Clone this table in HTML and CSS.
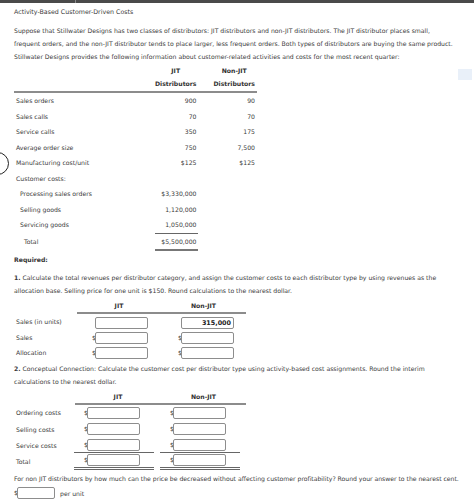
FILE: index.html
```html
<!DOCTYPE html>
<html>
<head>
<meta charset="utf-8">
<link rel="stylesheet" href="styles.css">
</head>
<body>
<div class="topbar"><div class="topbar-left"></div><div class="topbar-right"></div></div>
<div class="page">
  <div class="circle"></div>
  <div class="corner-btn"></div>
  <div class="title">Activity-Based Customer-Driven Costs</div>
  <p class="para">Suppose that Stillwater Designs has two classes of distributors: JIT distributors and non-JIT distributors. The JIT distributor places small, frequent orders, and the non-JIT distributor tends to place larger, less frequent orders. Both types of distributors are buying the same product. Stillwater Designs provides the following information about customer-related activities and costs for the most recent quarter:</p>

  <table class="data">
    <thead>
      <tr>
        <th class="lbl"></th>
        <th class="c2">JIT<br>Distributors</th>
        <th class="c3">Non-JIT<br>Distributors</th>
      </tr>
    </thead>
    <tbody>
      <tr><td class="lbl">Sales orders</td><td class="c2">900</td><td class="c3">90</td></tr>
      <tr><td class="lbl">Sales calls</td><td class="c2">70</td><td class="c3">70</td></tr>
      <tr><td class="lbl">Service calls</td><td class="c2">350</td><td class="c3">175</td></tr>
      <tr><td class="lbl">Average order size</td><td class="c2">750</td><td class="c3">7,500</td></tr>
      <tr><td class="lbl">Manufacturing cost/unit</td><td class="c2">$125</td><td class="c3">$125</td></tr>
      <tr><td class="lbl">Customer costs:</td><td class="c2"></td><td class="c3"></td></tr>
      <tr><td class="lbl ind1">Processing sales orders</td><td class="c2">$3,330,000</td><td class="c3"></td></tr>
      <tr><td class="lbl ind1">Selling goods</td><td class="c2">1,120,000</td><td class="c3"></td></tr>
      <tr><td class="lbl ind1">Servicing goods</td><td class="c2">1,050,000</td><td class="c3"></td></tr>
      <tr><td class="lbl ind2">Total</td><td class="c2 total">$5,500,000</td><td class="c3"></td></tr>
    </tbody>
  </table>

  <div class="required">Required:</div>
  <p class="para q1"><b>1.</b> Calculate the total revenues per distributor category, and assign the customer costs to each distributor type by using revenues as the allocation base. Selling price for one unit is $150. Round calculations to the nearest dollar.</p>

  <table class="ans ans1">
    <thead>
      <tr><th class="albl"></th><th class="a2">JIT</th><th class="a3">Non-JIT</th></tr>
    </thead>
    <tbody>
      <tr>
        <td class="albl">Sales (in units)</td>
        <td class="a2"><span class="cur"></span><span class="inp"></span></td>
        <td class="a3"><span class="cur"></span><span class="inp filled">315,000</span></td>
      </tr>
      <tr>
        <td class="albl">Sales</td>
        <td class="a2"><span class="cur">$</span><span class="inp"></span></td>
        <td class="a3"><span class="cur">$</span><span class="inp"></span></td>
      </tr>
      <tr>
        <td class="albl">Allocation</td>
        <td class="a2"><span class="cur">$</span><span class="inp"></span></td>
        <td class="a3"><span class="cur">$</span><span class="inp"></span></td>
      </tr>
    </tbody>
  </table>

  <p class="para q2"><b>2.</b> Conceptual Connection: Calculate the customer cost per distributor type using activity-based cost assignments. Round the interim calculations to the nearest dollar.</p>

  <table class="ans ans2">
    <thead>
      <tr><th class="albl"></th><th class="a2">JIT</th><th class="a3">Non-JIT</th></tr>
    </thead>
    <tbody>
      <tr>
        <td class="albl">Ordering costs</td>
        <td class="a2"><div class="box"><span class="cur">$</span><span class="inp"></span></div></td>
        <td class="a3"><div class="box"><span class="cur">$</span><span class="inp"></span></div></td>
      </tr>
      <tr>
        <td class="albl">Selling costs</td>
        <td class="a2"><div class="box"><span class="cur">$</span><span class="inp"></span></div></td>
        <td class="a3"><div class="box"><span class="cur">$</span><span class="inp"></span></div></td>
      </tr>
      <tr>
        <td class="albl">Service costs</td>
        <td class="a2"><div class="box sub"><span class="cur">$</span><span class="inp"></span></div></td>
        <td class="a3"><div class="box sub"><span class="cur">$</span><span class="inp"></span></div></td>
      </tr>
      <tr>
        <td class="albl">Total</td>
        <td class="a2"><div class="box tot"><span class="cur">$</span><span class="inp"></span></div></td>
        <td class="a3"><div class="box tot"><span class="cur">$</span><span class="inp"></span></div></td>
      </tr>
    </tbody>
  </table>

  <p class="para q3">For non JIT distributors by how much can the price be decreased without affecting customer profitability? Round your answer to the nearest cent.</p>
  <div class="final"><span class="cur">$</span><span class="inp small"></span><span class="unit">per unit</span></div>
</div>
</body>
</html>
```

FILE: styles.css
```css
html, body {
  margin: 0;
  padding: 0;
  background: #ffffff;
}
body {
  font-family: "DejaVu Sans", Verdana, sans-serif;
  font-size: 6.15px;
  color: #3a3a3a;
  line-height: 13px;
}
.topbar {
  display: flex;
  height: 3px;
  background: #4a4a4a;
}
.topbar-left {
  width: 75px;
  border-right: 1px solid #8a8a8a;
}
.page {
  position: relative;
  padding: 2px 0 0 14px;
}
.circle {
  position: absolute;
  left: -14px;
  top: 149px;
  width: 21px;
  height: 21px;
  border: 1.5px solid #222;
  border-radius: 50%;
}
.corner-btn {
  position: absolute;
  left: 458px;
  top: 66px;
  width: 14px;
  height: 11px;
  background: #e9f0f9;
}
.title {
  font-size: 6.3px;
  line-height: 14px;
}
.para {
  margin: 5px 0 0 0;
  width: 440px;
}
table {
  border-collapse: collapse;
  border-spacing: 0;
}
.data {
  margin-top: 1px;
  width: 243px;
}
.data th {
  font-weight: bold;
  color: #333;
  border-bottom: 2px solid #8c8c8c;
  padding: 0 2px 1px 0;
  line-height: 13px;
  text-align: center;
}
.data td {
  height: 15.5px;
  padding: 0;
  line-height: 15.5px;
}
.data .lbl {
  width: 140px;
  padding-left: 2px;
  text-align: left;
}
.data .ind1 { padding-left: 6px; }
.data .ind2 { padding-left: 10px; }
.data .c2 {
  width: 41px;
  padding-right: 2px;
  text-align: right;
}
.data th.c2 { text-align: center; }
.data .c3 {
  width: 41px;
  padding-left: 15px;
  padding-right: 2px;
  text-align: right;
}
.data th.c3 { text-align: center; }
.data td.total {
  border-top: 1px solid #666;
  border-bottom: 2px solid #777;
}
.required {
  font-weight: bold;
  color: #333;
  margin-top: 2px;
}
.q1 { margin-top: 5px; }
.ans {
  margin-top: 3px;
}
.ans th {
  font-weight: bold;
  color: #333;
  padding: 0;
  line-height: 12px;
  text-align: center;
}
.ans td {
  padding: 0;
  height: 15px;
  vertical-align: middle;
}
.ans .albl {
  padding-left: 2px;
  text-align: left;
}
.ans1 .albl { width: 61px; }
.ans1 th.a2, .ans1 th.a3 { border-bottom: 2px solid #8c8c8c; }
.ans1 .a2 { width: 84px; }
.ans1 .a3 { width: 85px; }
.ans1 td.a2 { padding-left: 15px; box-sizing: border-box; }
.ans1 td.a3 { padding-left: 17px; box-sizing: border-box; }
.ans1 tbody tr:first-child td { height: 17px; }
.cur {
  display: inline-block;
  width: 3px;
  text-align: right;
  vertical-align: middle;
  line-height: 12px;
}
.inp {
  display: inline-block;
  vertical-align: middle;
  width: 53px;
  height: 12px;
  box-sizing: border-box;
  border: 1px solid #8d8d8d;
  border-radius: 2px;
  background: #fff;
  line-height: 10px;
  text-align: right;
  padding-right: 2px;
  font-size: 6.4px;
}
.inp.filled {
  font-weight: bold;
  color: #222;
}
.q2 { margin-top: 2px; }
.ans2 .albl { width: 59px; }
.ans2 th.a2, .ans2 th.a3 { border-bottom: 2px solid #8c8c8c; }
.ans2 .a2 { width: 86px; }
.ans2 .a3 { width: 85px; }
.ans2 td { height: 16px; }
.ans2 .box {
  box-sizing: border-box;
  width: 80px;
  height: 16px;
  display: flex;
  align-items: center;
}
.ans2 .a2 .box { padding-left: 10px; margin-left: -1px; }
.ans2 .a3 .box { padding-left: 10px; margin-left: -1px; }
.ans2 .box.sub { border-bottom: 1px solid #666; }
.ans2 .box.tot { border-bottom: 3px double #666; height: 17px; }
.q3 {
  margin-top: 2px;
  width: auto;
  white-space: nowrap;
  letter-spacing: -0.02px;
}
.final {
  display: flex;
  align-items: center;
  height: 16px;
}
.inp.small { width: 38px; }
.unit { margin-left: 5px; }
```
